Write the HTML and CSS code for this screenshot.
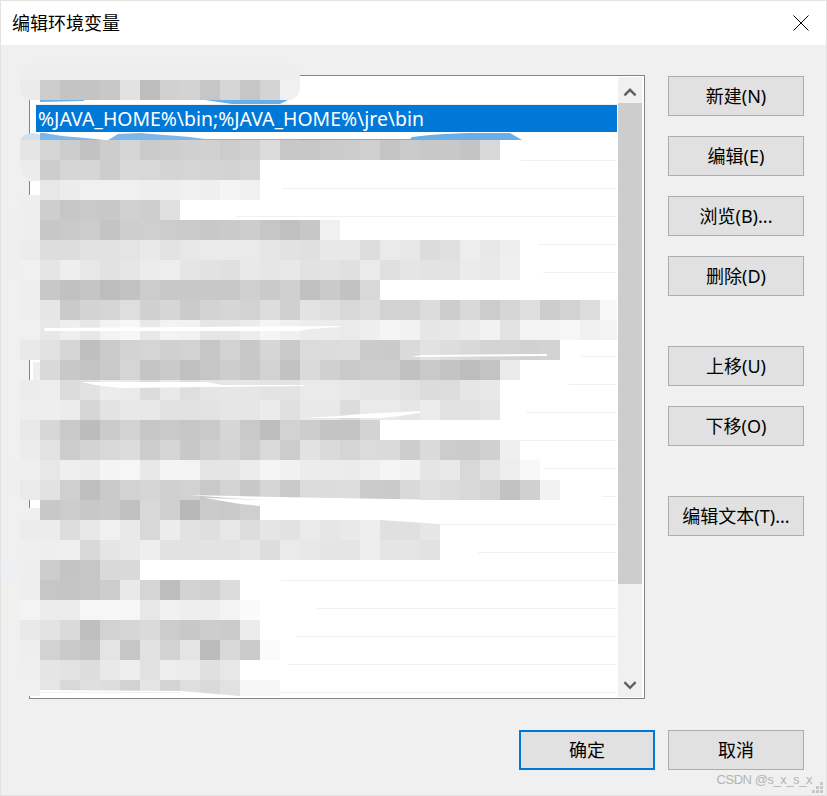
FILE: index.html
```html
<!DOCTYPE html>
<html lang="zh-CN">
<head>
<meta charset="utf-8">
<title>编辑环境变量</title>
<link rel="stylesheet" href="styles.css">
</head>
<body>
<div class="dialog">
  <header class="titlebar">
    <h1 class="title">编辑环境变量</h1>
    <svg class="close" viewBox="0 0 16 16" aria-label="关闭"><path d="M.5.5l15 15M15.5.5l-15 15"/></svg>
  </header>
  <main class="main">
    <div class="list">
      <ul class="rows">
        <li class="row"></li>
        <li class="row selected"><span class="sel-text">%JAVA_HOME%\bin;%JAVA_HOME%\jre\bin</span></li>
        <li class="row"></li><li class="row"></li><li class="row"></li><li class="row"></li>
        <li class="row"></li><li class="row"></li><li class="row"></li><li class="row"></li>
        <li class="row"></li><li class="row"></li><li class="row"></li><li class="row"></li>
        <li class="row"></li><li class="row"></li><li class="row"></li><li class="row"></li>
        <li class="row"></li><li class="row"></li><li class="row"></li><li class="row"></li>
      </ul>
      <div class="scrollbar">
        <div class="arrow">
          <svg viewBox="0 0 14 10"><path d="M1.4 8.4L7 2.8l5.6 5.6"/></svg>
        </div>
        <div class="thumb"></div>
        <div class="arrow arrow-down">
          <svg viewBox="0 0 14 10"><path d="M1.4 2.2L7 7.8l5.6-5.6"/></svg>
        </div>
      </div>
    </div>
    <aside class="side">
      <div class="group">
        <button class="btn">新建(N)</button>
        <button class="btn">编辑(E)</button>
        <button class="btn">浏览(B)...</button>
        <button class="btn">删除(D)</button>
      </div>
      <div class="group">
        <button class="btn">上移(U)</button>
        <button class="btn">下移(O)</button>
      </div>
      <div class="group">
        <button class="btn">编辑文本(T)...</button>
      </div>
    </aside>
  </main>
  <footer class="footer">
    <button class="btn default">确定</button>
    <button class="btn">取消</button>
  </footer>
  <svg id="mosaic" class="mosaic" width="827" height="796" viewBox="0 0 827 796" aria-hidden="true"></svg>
  <div class="watermark">CSDN @s_x_s_x</div>
  <div class="grip">
    <i></i><i></i><i></i><i></i><i></i><i></i>
  </div>
</div>
<script src="mosaic.js"></script>
</body>
</html>
```
FILE: styles.css
```css
* { box-sizing: border-box; }
html, body { margin: 0; padding: 0; }
body { background: #f0f0f0; font-family: "Noto Sans", "Noto Sans CJK SC", sans-serif; color: #000; }
.dialog { position: relative; width: 827px; height: 796px; background: #f0f0f0; border: 1px solid #e2e2e2; overflow: hidden; }
.titlebar { height: 44px; background: #fff; display: flex; align-items: center; justify-content: space-between; padding: 0 17px 0 11px; }
.title { margin: 0; font: 400 18px/24px "Noto Sans CJK SC", sans-serif; color: #000; position: relative; top: -1px; }
.close { width: 16px; height: 16px; fill: none; stroke: #000; stroke-width: 1; margin-top: -1px; }
.main { display: flex; align-items: flex-start; gap: 23px; padding: 30px 0 0 28px; }
.list { width: 616px; height: 624px; background: #fff; border: 1px solid #82828c; padding: 1px 2px 1px 1px; display: flex; }
.rows { list-style: none; margin: 0; padding: 0 0 0 5px; flex: 1; min-width: 0; height: 620px; overflow: hidden; }
.row { height: 28px; border-bottom: 1px solid #f0f0f0; }
.selected { border-bottom-color: #fff; background: #0078d7; color: #fff; font-size: 19.4px; line-height: 27px; padding-left: 2px; white-space: nowrap; background-clip: padding-box; }
.sel-text { display: block; }
.scrollbar { width: 24px; margin-left: 1px; height: 620px; background: #f0f0f0; display: flex; flex-direction: column; }
.arrow { height: 26px; display: flex; align-items: center; justify-content: center; }
.arrow svg { width: 14px; height: 10px; fill: none; stroke: #606060; stroke-width: 2.4; margin-top: 4px; }
.arrow-down { margin-top: auto; }
.arrow-down svg { margin-top: 2px; }
.thumb { height: 481px; background: #cdcdcd; }
.side { display: flex; flex-direction: column; gap: 50px; margin-top: 1px; }
.group { display: flex; flex-direction: column; gap: 20px; }
.btn { width: 136px; height: 40px; background: #e1e1e1; border: 1px solid #adadad; border-radius: 0; padding: 0; font: 400 18px/24px "Noto Sans", "Noto Sans CJK SC", sans-serif; color: #000; }
.default { border: 2px solid #0078d7; }
.footer { display: flex; justify-content: flex-end; gap: 13px; padding: 31px 22px 0 0; }
.mosaic { position: absolute; left: -1px; top: -1px; pointer-events: none; }
.watermark { position: absolute; right: 14px; top: 771px; font: 13px/16px "Liberation Sans", sans-serif; letter-spacing: -.45px; color: #b4b4b4; }
.grip { position: absolute; left: 811px; top: 781px; width: 12px; height: 12px; display: grid; grid-template-columns: repeat(3, 3px); grid-template-rows: repeat(3, 3px); gap: 1px; }
.grip i { background: #c6c6c6; }
.grip i:nth-child(1) { grid-column: 3; grid-row: 1; }
.grip i:nth-child(2) { grid-column: 2; grid-row: 2; }
.grip i:nth-child(3) { grid-column: 3; grid-row: 2; }
.grip i:nth-child(4) { grid-column: 1; grid-row: 3; }
.grip i:nth-child(5) { grid-column: 2; grid-row: 3; }
.grip i:nth-child(6) { grid-column: 3; grid-row: 3; }
```
FILE: mosaic.js
```js
// Redacted area of the list: a pixelated mosaic, with smears from the redaction brush.
var NS = 'http://www.w3.org/2000/svg';
var svg = document.getElementById('mosaic');
function add(tag, attrs) {
  var el = document.createElementNS(NS, tag);
  for (var k in attrs) el.setAttribute(k, attrs[k]);
  svg.appendChild(el);
}
function rect(x, y, w, h, fill) { add('rect', { x: x, y: y, width: w, height: h, fill: fill }); }
function poly(points, fill) { add('polygon', { points: points, fill: fill }); }

// White masks hide the row rules under the brush: [line y, first visible x]
[[160,521],[188,282],[216,237],[244,538],[272,543],[300,617],[328,617],[356,581],[384,569],[412,526],
 [440,465],[468,543],[496,602],[524,440],[552,478],[580,281],[608,317],[636,296],[664,288],[692,280]]
.forEach(function (l) { rect(31, l[0] - 1, l[1] - 31, 3, '#fff'); });

// Light-blue smear under the selected row
poly('20,140 24,135 32,133 38,134 46,136 60,136 72,140', '#cfe0ef');
poly('40,133 44,133 62,136 85,138 105,140 40,140', '#7db7ea');
poly('108,140 118,134 140,133 165,135 190,137 205,139 300,139 300,140', '#7db7ea');
poly('300,139 410,139 412,137 430,135 445,134 468,133 510,133 522,140 300,140', '#68aee8');
poly('40,100 84,100 84,101 40,102', '#68aee8');
poly('205,100 288,100 280,104 232,104', '#68aee8');

// Background-coloured brush covering the list's left and top edges
add('rect', { x: 20, y: 63, width: 280, height: 37, rx: 13, ry: 13, fill: '#eeeeee' });
rect(20, 85, 280, 15, '#eeeeee');
[[140,181],[195,358],[380,407],[413,497],[508,686]].forEach(function (b) {
  rect(22, b[0], 18, b[1] - b[0], '#efefef');
});
rect(33, 362, 7, 18, '#efefef');
rect(13, 205, 9, 70, '#efefef');
rect(8, 260, 14, 20, '#efefef');
rect(10, 462, 12, 34, '#efefef');
rect(1, 560, 21, 20, '#ecf0f3');
rect(1, 580, 21, 45, '#f0f0ee');

var rows = [
[80,20,'ebcdc4c4c8e2bdd1d3c6d6c6d4f0'],
[140,20,'e5d5cdc2cdd5cbcdd0d1ccd0dcc8c8cbcccfc5cbc8c8c4d8'],
[160,20,'eccdd6d6cdd9d8d4d5d4d3d5'],
[180,40,'e7ecf0f0f0eeeef0eff4f0'],
[200,20,'eecec6c9c8d1cee0'],
[220,20,'eec7c9ccc4cecfcccbc8cacdc6c0c7f0'],
[240,20,'ecdddde1e1e4e9e3e7eaeaeae6e2e0e8e8ddeae7dce0ede8ee'],
[260,20,'f0e5eee7e2e6ecede5e2e0e9e6e8e2e3e0eae0e5e3e3ebe9ef'],
[280,20,'edc8c1c5bdc2ccc8c8c8c8cfcad0c0cac2d8'],
[300,20,'eee6cad3d5ded0d6cbd3d6d2ddd0e3ded8ddd2d3dccdd9ccd6dfcdd2ddf8'],
[320,20,'f0e8eee7f3f7e8f3f2e6e6ecf5f0ececeaeef5f2e6e8ecf2e3f3f3f6f0f3'],
[340,20,'e9e2d6bfcbd3d5d0d2c6d2c8d6cadbdcddcbcadae2ddd9d4d4d1d3'],
[360,40,'d9c8c3c9d5c5cac0c6cdc8d2c2dad0c9cccdc1c9c3bdc3ea'],
[380,20,'eceddce2eceadce9dee5e6e6e3e3eaeae8e5e5e1dcdde6e8'],
[400,20,'edeeecd6e3e8e8e2e2e3e6e6ebe0e9e9dceaeae6ece2e2e4'],
[420,20,'e9d7c9bccbd2c6c9c6c9d6c9bed2cdc4c4d3'],
[440,20,'ece3ccd3d8dccdd6c8d0d4ccdacce2dad5dbdacddacccbd0ef'],
[460,20,'efe7efecf4f6e8f4f3e5e5ecf5f1ececebeff5f2e5e9d8e5edf8'],
[480,20,'eae2cfbfc9d2d6cfd2c9d4c8d6cadcdcddcbcad9e0dcd9d4c2d0f2'],
[500,40,'c8ccc8cac0d8d0b8cbc9cf'],
[520,20,'ececdde8f0e9d8ece2dfe7dde5e2eae6e9eee0e0e6'],
[540,20,'efeeefd9e5e9eee2e2e3e3e6ddeae8e5e5eee5e5e2'],
[560,20,'eecdc4c6d9d9'],
[580,20,'eec6c5c7cde9d5bdd2d0dc'],
[600,20,'f3ececf6f6f6e7f1eeeef3fa'],
[620,20,'e9e3dabfd2d6daccc8cdcbec'],
[640,20,'eed2c9c5e4c6e2d2e4bcd8cbfb'],
[660,20,'efe5e3dde9eee1edece0e7'],
[680,20,'f0e6d8dfddd2e5d4dedae1f6f6']
];
rows.forEach(function (r) {
  for (var i = 0, n = r[2].length / 2; i < n; i++) {
    var g = r[2].substr(i * 2, 2);
    var x = r[1] + i * 20;
    rect(x, r[0], Math.min(20, 617 - x), r[0] === 680 ? 16 : 20, '#' + g + g + g);
  }
});

// Rounded brush ends at the mosaic's corners
add('path', { d: 'M20 88v12h12a12 12 0 0 1-12-12z', fill: '#f0f0f0' });
add('path', { d: 'M300 88v12h-12a12 12 0 0 0 12-12z', fill: '#fff' });
add('path', { d: 'M20 168v12h14a14 14 0 0 1-14-14z', fill: '#f0f0f0' });
rect(20, 690, 20, 6, '#f0f0f0');
poly('40,690 180,691 240,696 40,696', '#fff');
rect(31, 692, 149, 1, '#f0f0f0');

// White streaks left by the brush across the mosaic
poly('45,328 340,326 340,327 310,329 300,331 45,331 44,329', '#fff');
poly('412,357 422,355 547,354 547,356 412,357', '#fff');
poly('82,382 207,382 222,385 304,385 304,386 120,388 95,385', '#fff');
poly('304,418 338,416 362,414 400,412 420,411 420,413 400,416 380,418', '#fff');
poly('187,495 277,497 420,499.5 420,500 260,500', '#fff');
poly('205,498 260,500 260,506 240,504', '#fff');
poly('380,520 440,520 440,524', '#fff');

// Desktop showing through at the window's left edge
[[19,12,'#5a1410'],[52,1,'#888'],[62,15,'#333'],[100,5,'#e07b20'],[113,2,'#60d0f0'],[147,13,'#111'],
 [180,3,'#e0a030'],[183,3,'#1070d0'],[210,3,'#e07b20'],[213,2,'#1070d0'],[238,2,'#70d8f0'],[270,3,'#1070d0'],
 [290,2,'#e0a030'],[406,6,'#c06010'],[412,6,'#1070d0'],[450,13,'#333'],[478,7,'#1080d0'],[506,1,'#333'],
 [519,1,'#333'],[546,2,'#c06010'],[573,2,'#1070d0'],[590,12,'#7a2e10'],[631,2,'#1080e0'],[652,4,'#f0e868'],[680,4,'#f0e868']]
.forEach(function (t) { rect(0, t[0], 1, t[1], t[2]); });
```
